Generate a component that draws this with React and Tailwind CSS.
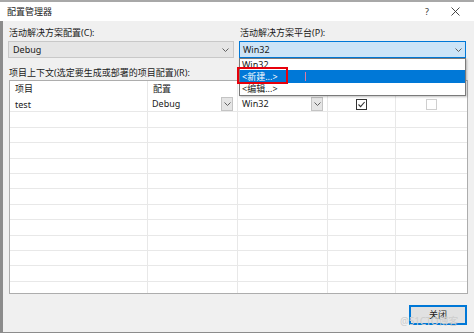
import React from "react";

const font = { fontFamily: '"Noto Sans", "Noto Sans CJK SC", sans-serif' };

function Chevron({ className = "" }) {
  return (
    <svg width="7" height="4" viewBox="0 0 7 4" className={className}>
      <path d="M0.5 0.5 L3.5 3.5 L6.5 0.5" fill="none" stroke="#606060" strokeWidth="1" />
    </svg>
  );
}

function CellCombo({ value }) {
  return (
    <div className="flex h-full items-center justify-between pl-[4px] pr-[4px]">
      <span>{value}</span>
      <div className="flex h-[14px] w-[12px] items-center justify-center border border-[#c4c4c4] bg-[#e5e5e5]">
        <Chevron />
      </div>
    </div>
  );
}

function Checkbox({ checked }) {
  return (
    <div className="flex h-full items-center justify-center">
      <div
        className={
          "flex h-[11px] w-[11px] items-center justify-center border bg-white " +
          (checked ? "border-[#333333]" : "border-[#cfcfcf]")
        }
      >
        {checked && (
          <svg width="9" height="9" viewBox="0 0 9 9">
            <path d="M1.5 4.5 L3.6 6.6 L7.6 2" fill="none" stroke="#333333" strokeWidth="1.1" />
          </svg>
        )}
      </div>
    </div>
  );
}

const cols = ["w-[138px]", "w-[90px]", "w-[90px]", "w-[68px]", "w-[70px]"];

export default function App() {
  const emptyRows = Array.from({ length: 12 });

  return (
    <div className="relative h-[335px] w-[474px] overflow-hidden bg-white text-[9px] text-[#1a1a1a]" style={font}>
      {/* title bar */}
      <div className="flex h-[21px] items-center justify-between border-t-2 border-[#a8a8a8] bg-white pl-[7px] pr-[14px]">
        <span className="text-[9px] leading-none">配置管理器</span>
        <div className="flex items-center gap-[22px] text-[#333]">
          <span className="text-[9px]">?</span>
          <svg width="9" height="9" viewBox="0 0 9 9">
            <path d="M0.5 0.5 L8.5 8.5 M8.5 0.5 L0.5 8.5" stroke="#333" strokeWidth="0.9" />
          </svg>
        </div>
      </div>

      {/* body */}
      <div className="flex h-[312px] flex-col border-b border-l-[3px] border-[#8c8c8c] bg-[#f0f0f0]">
        <div className="flex gap-[5px] pl-[5px] pr-[8px] pt-[6px]">
          <div className="flex w-[226px] flex-col">
            <span className="h-[14px] pl-[1px] leading-[12px]">活动解决方案配置(C):</span>
            <div className="flex h-[17px] items-center justify-between border border-[#c8c8c8] bg-[#e5e5e5] px-[4px]">
              <span>Debug</span>
              <Chevron />
            </div>
          </div>
          <div className="relative flex w-[227px] flex-col">
            <span className="h-[14px] pl-[1px] leading-[12px]">活动解决方案平台(P):</span>
            <div className="flex h-[17px] items-center justify-between border border-[#0078d7] bg-[#cce4f7] px-[3px]">
              <span>Win32</span>
              <Chevron />
            </div>
          </div>
        </div>

        <span className="mt-[9px] h-[13px] pl-[6px] leading-[12px]">项目上下文(选定要生成或部署的项目配置)(R):</span>

        {/* grid */}
        <div className="mx-[6px] h-[214px] overflow-hidden border border-[#adadad] bg-white">
          <div className="flex h-[16px] items-end">
            {cols.map((w, i) => (
              <div key={i} className={w + " h-full border-r border-[#e8e8e8] pl-[5px] leading-[16px] last:border-r-0"}>
                {i === 0 ? "项目" : i === 1 ? "配置" : ""}
              </div>
            ))}
          </div>
          <div className="flex h-[15.4px] border-b border-[#e8e8e8]">
            <div className={cols[0] + " border-r border-[#e8e8e8] pl-[5px] leading-[15px]"}>test</div>
            <div className={cols[1] + " border-r border-[#e8e8e8]"}>
              <CellCombo value="Debug" />
            </div>
            <div className={cols[2] + " border-r border-[#e8e8e8]"}>
              <CellCombo value="Win32" />
            </div>
            <div className={cols[3] + " border-r border-[#e8e8e8]"}>
              <Checkbox checked />
            </div>
            <div className={cols[4]}>
              <Checkbox />
            </div>
          </div>
          {emptyRows.map((_, r) => (
            <div key={r} className="flex h-[15.4px] border-b border-[#e8e8e8]">
              {cols.map((w, i) => (
                <div key={i} className={w + " border-r border-[#e8e8e8] last:border-r-0"} />
              ))}
            </div>
          ))}
        </div>

        <div className="flex justify-end pr-[7px] pt-[11px]">
          <button className="flex h-[20px] w-[58px] items-center justify-center border-2 border-[#0078d7] bg-[#e1e1e1] text-[9px]">
            关闭
          </button>
        </div>
      </div>

      {/* dropdown list */}
      <div className="absolute left-[239px] top-[58px] w-[227px] border border-[#7a7a7a] bg-white shadow-[1px_1px_2px_rgba(0,0,0,0.25)]">
        <div className="h-[11px] pl-[2px] leading-[11px]">Win32</div>
        <div className="relative h-[13px] bg-[#0078d7] pl-[2px] leading-[13px] text-white">
          &lt;新建...&gt;
          <div className="absolute left-[65px] top-[2px] h-[9px] w-[1px] bg-[#e07aa0]" />
        </div>
        <div className="h-[12px] pl-[2px] leading-[12px]">&lt;编辑...&gt;</div>
      </div>

      {/* red highlight box */}
      <div className="absolute left-[237px] top-[67px] h-[17px] w-[51px] border-2 border-solid border-red-600" />

      {/* watermark */}
      <span className="absolute left-[400px] top-[314px] text-[10px] tracking-tight text-[#cdcdcd]">@51CTO博客</span>
    </div>
  );
}
